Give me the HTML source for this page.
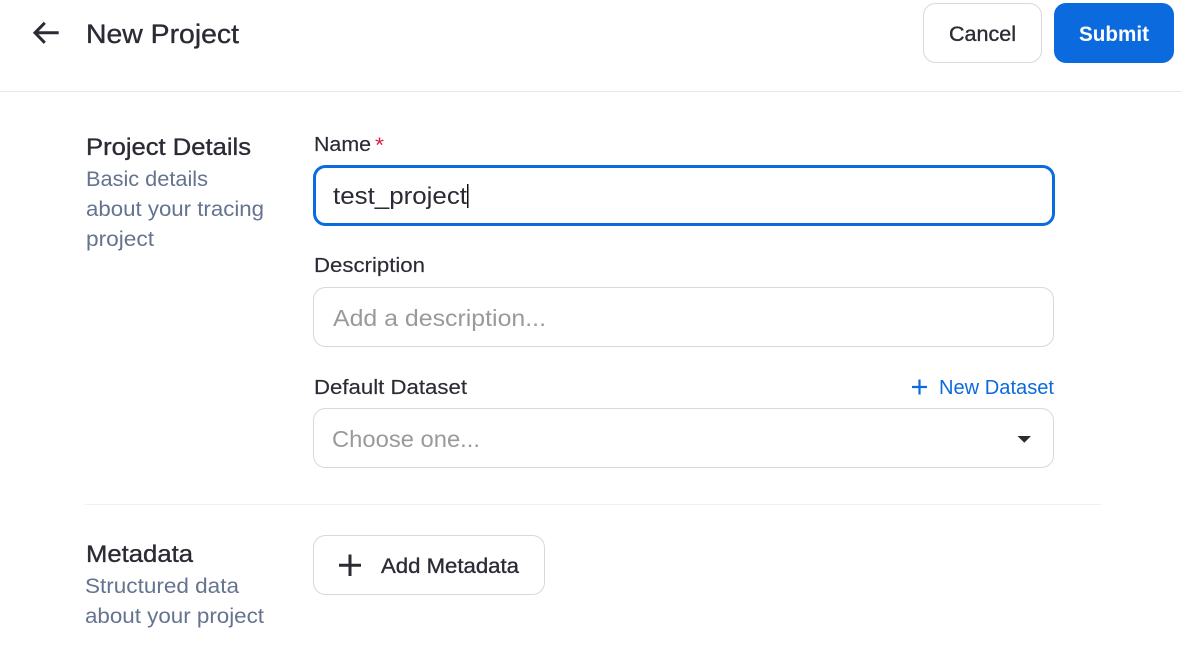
<!DOCTYPE html>
<html lang="en">
<head>
<meta charset="utf-8">
<title>New Project</title>
<style>
html,body{margin:0;padding:0;width:1182px;height:658px;overflow:hidden;background:#fff}
svg{display:block}
text{font-family:"Liberation Sans",sans-serif;fill:#2a2b34}
.m{stroke:#2a2b34;stroke-width:.35}
.s{fill:#64748f;font-size:21.5px}
.l{font-size:20.5px;stroke:#2a2b34;stroke-width:.15}
.p{fill:#9a9a9a;font-size:23.5px}
</style>
</head>
<body>
<svg width="1182" height="658" viewBox="0 0 1182 658" xmlns="http://www.w3.org/2000/svg">
<rect x="0" y="91" width="1182" height="1" fill="#e8e8ea"/>
<path d="M58.700 32.800H35.500M44.800 22.800L35 32.800L44.800 42.800" fill="none" stroke="#2a2b34" stroke-width="3"/>
<text x="86" y="43" font-size="27" class="m" textLength="153" lengthAdjust="spacingAndGlyphs">New Project</text>
<rect x="923.500" y="3.500" width="118" height="59" rx="12" fill="#fff" stroke="#d8d8de"/>
<text x="949" y="41" font-size="21.500" class="m" textLength="67" lengthAdjust="spacingAndGlyphs">Cancel</text>
<rect x="1054" y="3" width="120" height="60" rx="12" fill="#0b6bde"/>
<text x="1079" y="41" font-size="21.500" font-weight="700" style="fill:#fff" textLength="70" lengthAdjust="spacingAndGlyphs">Submit</text>

<text x="86" y="155" font-size="24" class="m" textLength="165" lengthAdjust="spacingAndGlyphs">Project Details</text>
<text x="86" y="186" class="s" textLength="122" lengthAdjust="spacingAndGlyphs">Basic details</text>
<text x="86" y="216" class="s" textLength="178" lengthAdjust="spacingAndGlyphs">about your tracing</text>
<text x="86" y="246" class="s" textLength="68" lengthAdjust="spacingAndGlyphs">project</text>

<text x="314" y="151" class="l" textLength="57" lengthAdjust="spacingAndGlyphs">Name</text>
<text x="375" y="152" font-size="21" style="fill:#d9213a" textLength="9" lengthAdjust="spacingAndGlyphs">*</text>
<rect x="314.500" y="166.500" width="739" height="58" rx="11" fill="#fff" stroke="#0b6bde" stroke-width="3"/>
<text x="333" y="204" font-size="24" textLength="134" lengthAdjust="spacingAndGlyphs">test_project</text>
<rect x="467" y="184" width="1.500" height="24" fill="#111"/>

<text x="314" y="272" class="l" textLength="111" lengthAdjust="spacingAndGlyphs">Description</text>
<rect x="313.500" y="287.500" width="740" height="59" rx="12" fill="#fff" stroke="#d8d8de"/>
<text x="333" y="326" class="p" textLength="213" lengthAdjust="spacingAndGlyphs">Add a description...</text>

<text x="314" y="394" class="l" textLength="153" lengthAdjust="spacingAndGlyphs">Default Dataset</text>
<path d="M919.500 379.500V394.500M912 387H927" fill="none" stroke="#0b6bde" stroke-width="2.200"/>
<text x="939" y="394" font-size="20" style="fill:#0b6bde" textLength="115" lengthAdjust="spacingAndGlyphs">New Dataset</text>
<rect x="313.500" y="408.500" width="740" height="59" rx="12" fill="#fff" stroke="#d8d8de"/>
<text x="332" y="447" class="p" textLength="148" lengthAdjust="spacingAndGlyphs">Choose one...</text>
<path d="M1017.500 436H1031L1024.300 442.800Z" fill="#2a2b34"/>

<rect x="85" y="504" width="1016" height="1" fill="#f0f0f3"/>

<text x="86" y="562" font-size="24" class="m" textLength="107" lengthAdjust="spacingAndGlyphs">Metadata</text>
<text x="85" y="593" class="s" textLength="154" lengthAdjust="spacingAndGlyphs">Structured data</text>
<text x="85" y="623" class="s" textLength="179" lengthAdjust="spacingAndGlyphs">about your project</text>
<rect x="313.500" y="535.500" width="231" height="59" rx="12" fill="#fff" stroke="#d8d8de"/>
<path d="M350 554.500V576M339 565.300H361" fill="none" stroke="#2a2b34" stroke-width="3"/>
<text x="381" y="573" font-size="21.500" class="m" textLength="138" lengthAdjust="spacingAndGlyphs">Add Metadata</text>
</svg>
</body>
</html>
